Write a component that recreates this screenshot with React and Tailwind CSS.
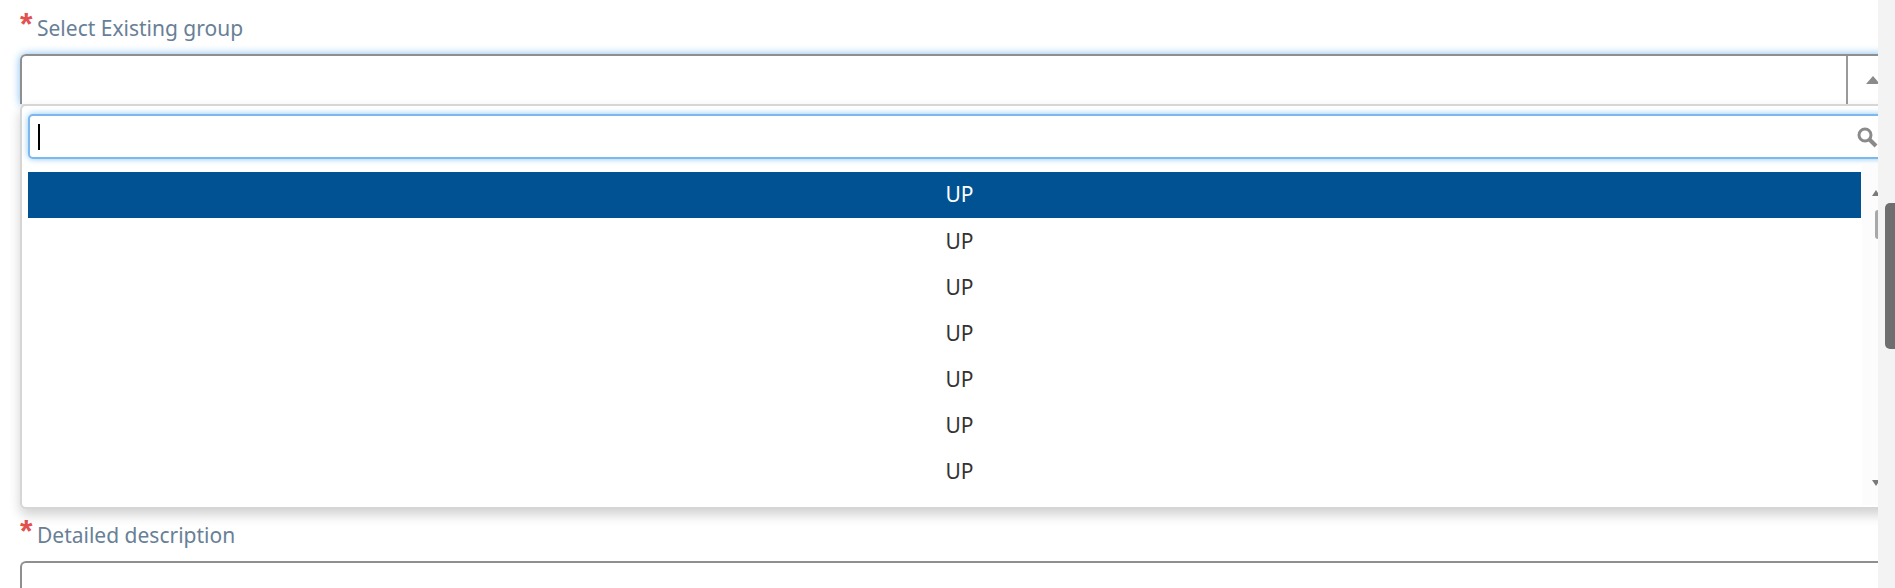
function Label({ children }) {
  return (
    <div className="flex h-[28px] items-start pl-[20px]">
      <span className="text-[32px] leading-[32px] font-bold text-[#e25050] font-['Liberation_Sans',sans-serif] w-[17px] h-[20px] mt-[-6px]">*</span>
      <span className="text-[21px] leading-[28px] text-[#688096] font-['Noto_Sans',sans-serif]">{children}</span>
    </div>
  );
}
function Row({ active }) {
  return (
    <div className={"flex h-[46px] items-center justify-center pl-[30px] text-[21px] font-['Noto_Sans',sans-serif] " + (active ? "bg-[#005293] text-white" : "pt-[2px] text-[#333333]")}>UP</div>
  );
}
export default function App() {
  return (
    <div className="h-[588px] w-[1895px] overflow-hidden bg-white flex">
      <div className="w-[1878px] shrink-0 pt-[14px] overflow-hidden">
        <Label>Select Existing group</Label>
        <div className="ml-[20px] mr-[-20px] mt-[12px] relative">
          <div className="h-[50px] flex justify-end rounded-t-[6px] border-t-2 border-l-2 border-[#8f8f8f] shadow-[0_0_8px_#7dbcf0]">
            <div className="w-[52px] shrink-0 border-l-2 border-[#9a9a9a] flex items-center pl-[17px]">
              <svg width="16" height="10" viewBox="0 0 16 10"><path d="M8 1 15 9H1z" fill="#8a8a8a" /></svg>
            </div>
          </div>
          <div className="relative bg-white h-[405px] rounded-[6px] border-2 border-[#d6d6d6] shadow-[0_6px_12px_rgba(0,0,0,0.18)] pl-[6px] pt-[8px]">
            <div className="flex items-center h-[45px] rounded-[5px] border-2 border-[#7db8ec] shadow-[0_0_6px_#8cc6f3] bg-white pl-[8px] pr-[14px]">
              <div className="w-[2px] h-[26px] bg-black" />
              <svg width="24" height="24" viewBox="0 0 24 24" className="ml-auto"><circle cx="9" cy="10" r="6" fill="none" stroke="#8a8a8a" strokeWidth="3" /><path d="M13.5 14.5 20 21" stroke="#8a8a8a" strokeWidth="4" /></svg>
            </div>
            <div className="mt-[13px] w-[1833px]">
              <Row active /><Row /><Row /><Row /><Row /><Row /><Row />
            </div>
            <div className="absolute left-[1840px] top-[57px] w-[16px] bottom-[2px] bg-[#fcfcfc]">
              <svg width="8" height="6" viewBox="0 0 8 6" className="absolute left-[10px] top-[27px]"><path d="M4 0 8 6H0z" fill="#7a7a7a" /></svg>
              <div className="absolute left-[13px] top-[47px] w-[6px] h-[29px] rounded-[3px] bg-[#a8a8a8]" />
              <svg width="8" height="6" viewBox="0 0 8 6" className="absolute left-[10px] top-[317px]"><path d="M0 0H8L4 6z" fill="#7a7a7a" /></svg>
            </div>
          </div>
        </div>
        <div className="mt-[12px]"><Label>Detailed description</Label></div>
        <div className="ml-[20px] mr-[-20px] mt-[12px] h-[40px] rounded-t-[6px] border-t-2 border-l-2 border-[#8f8f8f]" />
      </div>
      <div className="flex-1 bg-[#f3f3f3] relative">
        <div className="absolute right-0 top-[203px] w-[10px] h-[146px] rounded-l-[5px] bg-[#6e6e6e]" />
      </div>
    </div>
  );
}
